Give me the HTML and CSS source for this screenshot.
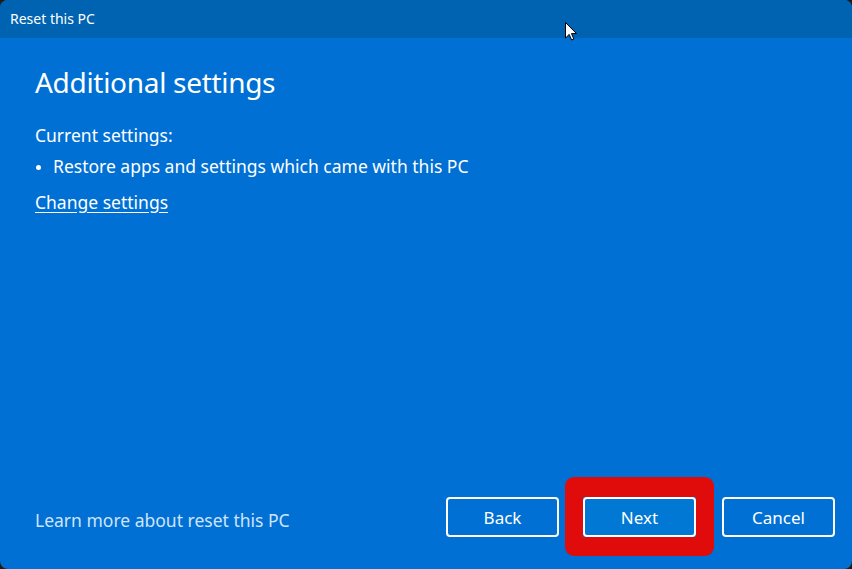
FILE: index.html
```html
<!DOCTYPE html>
<html lang="en">
<head>
<meta charset="utf-8">
<title>Reset this PC</title>
<link rel="stylesheet" href="styles.css">
</head>
<body>
<div class="window">
  <header class="titlebar">Reset this PC</header>
  <main class="content">
    <h1 class="heading">Additional settings</h1>
    <p class="label">Current settings:</p>
    <ul class="list">
      <li>Restore apps and settings which came with this PC</li>
    </ul>
    <a class="change" href="#">Change settings</a>
  </main>
  <footer class="footer">
    <a class="learn" href="#">Learn more about reset this PC</a>
    <div class="buttons">
      <button class="btn">Back</button>
      <div class="highlight"><button class="btn btn-next">Next</button></div>
      <button class="btn btn-cancel">Cancel</button>
    </div>
  </footer>
</div>
<svg class="cursor" width="13" height="20" viewBox="0 0 13 20">
  <path d="M0.5 0.5 L0.5 16 L4.2 12.4 L6.6 18 L8.8 17 L6.5 11.6 L11.5 11.6 Z" fill="#fff" stroke="#000" stroke-width="1"/>
</svg>
</body>
</html>
```
FILE: styles.css
```css
html, body {
  margin: 0;
  padding: 0;
  background: #1c1c1c;
  width: 852px;
  height: 569px;
  overflow: hidden;
}
body {
  font-family: "Noto Sans", "Open Sans", sans-serif;
  color: #fff;
  position: relative;
}
.window {
  width: 852px;
  height: 569px;
  border-radius: 8px;
  overflow: hidden;
  background: #0070d4;
  display: flex;
  flex-direction: column;
}
.titlebar {
  height: 38px;
  flex: none;
  background: #0063b1;
  font-size: 14px;
  line-height: 38px;
  padding-left: 10px;
  color: #fff;
}
.content {
  flex: 1;
  padding: 26px 35px 0;
}
.heading {
  margin: 0;
  font-weight: 400;
  font-size: 28px;
  line-height: 36px;
  letter-spacing: -0.3px;
}
.label {
  margin: 23px 0 0;
  font-size: 17.5px;
  line-height: 24px;
}
.list {
  margin: 7px 0 0;
  padding: 0 0 0 18px;
  font-size: 17.5px;
  line-height: 24px;
  list-style: none;
}
.list li {
  position: relative;
}
.list li::before {
  content: "";
  position: absolute;
  left: -17px;
  top: 11px;
  width: 5px;
  height: 5px;
  border-radius: 50%;
  background: #fff;
}
.change {
  display: inline-block;
  margin-top: 12px;
  font-size: 17.5px;
  line-height: 24px;
  color: #fff;
  text-decoration: underline;
  text-underline-offset: 3px;
}
.footer {
  flex: none;
  height: 80px;
  padding: 8px 17px 0 35px;
  display: flex;
  align-items: flex-start;
  justify-content: space-between;
  box-sizing: border-box;
}
.learn {
  font-size: 17.5px;
  line-height: 24px;
  color: #cfe4fb;
  text-decoration: none;
  margin-top: 11px;
}
.buttons {
  display: flex;
  align-items: center;
  gap: 24px;
}
.btn {
  width: 113px;
  height: 40px;
  box-sizing: border-box;
  border: 2px solid #fff;
  border-radius: 4px;
  background: #0070d4;
  color: #fff;
  font-family: inherit;
  font-size: 17px;
  padding: 0;
}
.btn-cancel {
  margin-left: 2px;
}
.highlight {
  position: relative;
}
.highlight::before {
  content: "";
  position: absolute;
  left: -18px;
  right: -18px;
  top: -20px;
  bottom: -19px;
  background: #e00b0b;
  border-radius: 9px;
  z-index: 0;
}
.highlight::after {
  content: "";
  position: absolute;
  inset: 0;
  background: #0a6cc9;
  z-index: 0;
}
.btn-next {
  position: relative;
  z-index: 1;
  background: #0078d4;
  display: block;
}
.cursor {
  position: absolute;
  left: 565px;
  top: 22px;
}
```
